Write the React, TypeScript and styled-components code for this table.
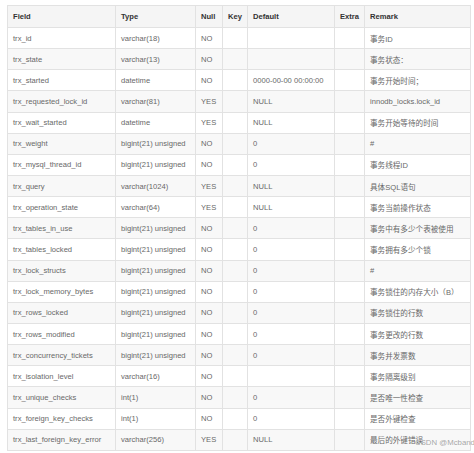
import React from "react";
import styled, { createGlobalStyle } from "styled-components";

const GlobalStyle = createGlobalStyle`
  html, body { margin: 0; padding: 0; background: #ffffff; }
  body { font-family: "Liberation Sans", Arial, "Noto Sans CJK SC", sans-serif; overflow: hidden; }
`;

const Page = styled.div`
  position: relative;
  width: 474px;
  height: 453px;
  overflow: hidden;
  padding: 5px 0 0 7px;
  box-sizing: border-box;
`;

const Table = styled.table`
  border-collapse: collapse;
  table-layout: fixed;
  width: 463px;
  font-size: 7.6px;
  font-family: "Liberation Sans", Arial, "Noto Sans CJK SC", sans-serif;
`;

const HeadRow = styled.tr`
  height: 22px;
  background: #f5f5f5;
`;

const Row = styled.tr<{ $striped: boolean }>`
  height: 21.15px;
  background: ${(p) => (p.$striped ? "#f8f8f8" : "#ffffff")};
`;

const Th = styled.th`
  border: 1px solid #e2e2e2;
  padding: 0 0 0 5px;
  text-align: left;
  font-weight: bold;
  color: #333333;
  white-space: nowrap;
  overflow: hidden;
`;

const Td = styled.td`
  border: 1px solid #e2e2e2;
  padding: 0 0 0 5px;
  color: #686868;
  white-space: nowrap;
  overflow: hidden;
`;

const Watermark = styled.div`
  position: absolute;
  left: 415px;
  top: 438px;
  font-size: 7.8px;
  color: rgba(150, 150, 150, 0.85);
  font-family: "Liberation Sans", Arial, sans-serif;
  white-space: nowrap;
`;

const columns = [
  { title: "Field", width: 108 },
  { title: "Type", width: 80 },
  { title: "Null", width: 27 },
  { title: "Key", width: 25 },
  { title: "Default", width: 87 },
  { title: "Extra", width: 30 },
  { title: "Remark", width: 106 },
];

const rows: string[][] = [
  ["trx_id", "varchar(18)", "NO", "", "", "", "事务ID"],
  ["trx_state", "varchar(13)", "NO", "", "", "", "事务状态："],
  ["trx_started", "datetime", "NO", "", "0000-00-00 00:00:00", "", "事务开始时间；"],
  ["trx_requested_lock_id", "varchar(81)", "YES", "", "NULL", "", "innodb_locks.lock_id"],
  ["trx_wait_started", "datetime", "YES", "", "NULL", "", "事务开始等待的时间"],
  ["trx_weight", "bigint(21) unsigned", "NO", "", "0", "", "#"],
  ["trx_mysql_thread_id", "bigint(21) unsigned", "NO", "", "0", "", "事务线程ID"],
  ["trx_query", "varchar(1024)", "YES", "", "NULL", "", "具体SQL语句"],
  ["trx_operation_state", "varchar(64)", "YES", "", "NULL", "", "事务当前操作状态"],
  ["trx_tables_in_use", "bigint(21) unsigned", "NO", "", "0", "", "事务中有多少个表被使用"],
  ["trx_tables_locked", "bigint(21) unsigned", "NO", "", "0", "", "事务拥有多少个锁"],
  ["trx_lock_structs", "bigint(21) unsigned", "NO", "", "0", "", "#"],
  ["trx_lock_memory_bytes", "bigint(21) unsigned", "NO", "", "0", "", "事务锁住的内存大小（B）"],
  ["trx_rows_locked", "bigint(21) unsigned", "NO", "", "0", "", "事务锁住的行数"],
  ["trx_rows_modified", "bigint(21) unsigned", "NO", "", "0", "", "事务更改的行数"],
  ["trx_concurrency_tickets", "bigint(21) unsigned", "NO", "", "0", "", "事务并发票数"],
  ["trx_isolation_level", "varchar(16)", "NO", "", "", "", "事务隔离级别"],
  ["trx_unique_checks", "int(1)", "NO", "", "0", "", "是否唯一性检查"],
  ["trx_foreign_key_checks", "int(1)", "NO", "", "0", "", "是否外键检查"],
  ["trx_last_foreign_key_error", "varchar(256)", "YES", "", "NULL", "", "最后的外键错误"],
];

export default function App() {
  return (
    <>
      <GlobalStyle />
      <Page>
        <Table>
          <colgroup>
            {columns.map((c) => (
              <col key={c.title} style={{ width: c.width }} />
            ))}
          </colgroup>
          <thead>
            <HeadRow>
              {columns.map((c) => (
                <Th key={c.title}>{c.title}</Th>
              ))}
            </HeadRow>
          </thead>
          <tbody>
            {rows.map((r, i) => (
              <Row key={r[0]} $striped={i % 2 === 1}>
                {r.map((cell, j) => (
                  <Td key={j}>{cell}</Td>
                ))}
              </Row>
            ))}
          </tbody>
        </Table>
        <Watermark>CSDN @Mcband</Watermark>
      </Page>
    </>
  );
}
